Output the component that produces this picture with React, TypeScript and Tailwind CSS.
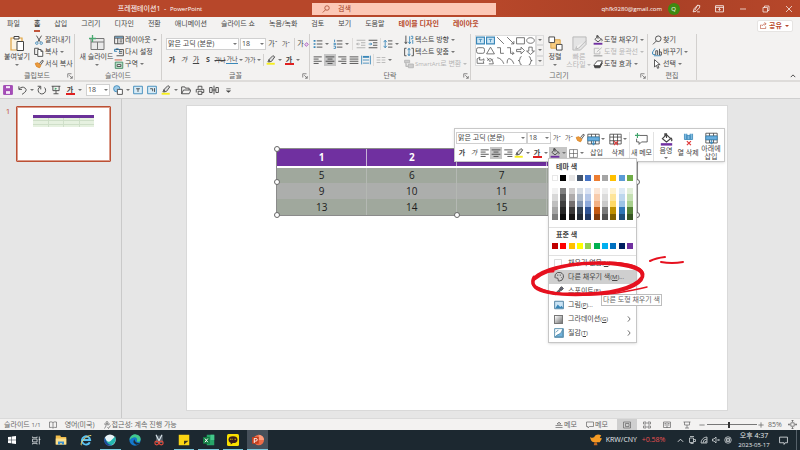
import type { ReactNode } from 'react';
import clsx from 'clsx';

const tabs = ['파일', '홈', '삽입', '그리기', '디자인', '전환', '애니메이션', '슬라이드 쇼', '녹음/녹화', '검토', '보기', '도움말'];
const contextTabs = ['테이블 디자인', '레이아웃'];

const themeColors = [
  { base: '#ffffff', shades: ['#f2f2f2', '#d8d8d8', '#bfbfbf', '#a5a5a5', '#7f7f7f'] },
  { base: '#000000', shades: ['#7f7f7f', '#595959', '#3f3f3f', '#262626', '#0c0c0c'] },
  { base: '#e7e6e6', shades: ['#d0cece', '#aeabab', '#757070', '#3a3838', '#171616'] },
  { base: '#44546a', shades: ['#d6dce4', '#adb9ca', '#8496b0', '#323f4f', '#222a35'] },
  { base: '#4472c4', shades: ['#d9e2f3', '#b4c6e7', '#8eaadb', '#2f5496', '#1f3864'] },
  { base: '#ed7d31', shades: ['#fbe5d5', '#f7cbac', '#f4b183', '#c55a11', '#833c0b'] },
  { base: '#a5a5a5', shades: ['#ededed', '#dbdbdb', '#c9c9c9', '#7b7b7b', '#525252'] },
  { base: '#ffc000', shades: ['#fff2cc', '#fee599', '#ffd965', '#bf9000', '#7f6000'] },
  { base: '#5b9bd5', shades: ['#deebf6', '#bdd7ee', '#9cc3e5', '#2e75b5', '#1e4e79'] },
  { base: '#70ad47', shades: ['#e2efd9', '#c5e0b3', '#a8d08d', '#538135', '#375623'] },
];

const standardColors = ['#c00000', '#ff0000', '#ffc000', '#ffff00', '#92d050', '#00b050', '#00b0f0', '#0070c0', '#002060', '#7030a0'];

const tableHead = ['1', '2', '', ''];
const tableRows = [
  ['5', '6', '7', ''],
  ['9', '10', '11', ''],
  ['13', '14', '15', ''],
];

type IconProps = { className?: string; children?: ReactNode };

function Icon({ className = 'size-[10px]', children }: IconProps) {
  return (
    <svg viewBox="0 0 16 16" fill="none" stroke="currentColor" strokeWidth="1.4" className={clsx('shrink-0', className)} aria-hidden="true">
      {children}
    </svg>
  );
}

function Chevron({ className = 'text-[#777]' }: { className?: string }) {
  return (
    <span className={clsx('flex w-1.5 shrink-0 justify-center', className)}>
      <svg viewBox="0 0 8 8" className="size-1" fill="currentColor" aria-hidden="true">
        <path d="M0 2h8L4 6z" />
      </svg>
    </span>
  );
}

const blue = '#3a87b8';

const CutIcon = () => (
  <Icon>
    <path d="M4 1l6 10M12 1L6 11" />
    <circle cx="4.5" cy="13" r="2" stroke={blue} />
    <circle cx="11.5" cy="13" r="2" stroke={blue} />
  </Icon>
);
const CopyIcon = () => (
  <Icon>
    <path d="M6 12H1V2h6v2" />
    <path d="M6 4h5l3 3v8H6zM11 4v3h3" fill="#fff" />
  </Icon>
);
const BrushIcon = () => (
  <Icon>
    <path d="M9 7l4-5 2 1-4 6z" />
    <path d="M2 7l4-1 5 4-2 4-5-2z" fill="#eb9b3e" stroke="#d98220" />
  </Icon>
);
const PasteIcon = () => (
  <Icon className="size-4">
    <path d="M9 15H2V3h11v3" stroke="#dfa23f" strokeWidth="1.2" fill="#fcf3e2" />
    <path d="M5 3V1.500h5V4H5z" fill="#fff" strokeWidth="1" />
    <path d="M8 6.500h6.500v9H8z" fill="#fff" strokeWidth="1" />
  </Icon>
);
const NewSlideIcon = () => (
  <Icon className="size-4">
    <path d="M2 3.500h13v11H2zM2 7h13M8.500 7v7.500" fill="#e9e9e9" stroke="#777" strokeWidth="1" />
    <path d="M3.500 0v7M0 3.500h7" stroke="#4aa970" strokeWidth="1.300" />
  </Icon>
);
const LayoutIcon = () => (
  <Icon>
    <path d="M1 2h14v12H1zM1 5h14M6 5v9M9 8h4M9 11h4" />
    <path d="M2 3.500h12" stroke={blue} />
  </Icon>
);
const ResetIcon = () => (
  <Icon>
    <path d="M2 4h13v10H4M8 7h5M8 10h5" />
    <path d="M1 7a4 4 0 117 2M1 3v4h4" stroke={blue} />
  </Icon>
);
const SectionIcon = () => (
  <Icon>
    <path d="M1 1.500h12" stroke="#d04e32" />
    <path d="M2 5h12v10H2z" fill="#b9dec8" stroke="#418a62" />
    <path d="M5 9h6v3H5z" fill="#fff" />
  </Icon>
);

// Korean sample letter used by the character formatting buttons
function Letter({ children = '가', className }: { children?: ReactNode; className?: string }) {
  return <span className={clsx('leading-[8px]', className)}>{children}</span>;
}

function FontColorIcon() {
  return (
    <span className="flex flex-col items-center">
      <Letter className="h-[7px] leading-[7px] font-bold">가</Letter>
      <span className="h-[2px] w-[9px] bg-[#e02020]" />
    </span>
  );
}
function HighlightIcon() {
  return (
    <Icon>
      <path d="M5 7l6-6 3 2-5 7-3 1z" fill="#ddd" />
      <path d="M5 7l-2 4h3" />
      <path d="M1 14h13" stroke="#f7ee1c" strokeWidth="3" />
    </Icon>
  );
}
function FillIcon({ className }: { className?: string }) {
  return (
    <Icon className={className}>
      <path d="M3 7l5-5 5 5-5 4zM6 4V1h2v5M13 6c2 1 2 3 1 4" />
      <path d="M1 14h14" stroke="#7030a0" strokeWidth="3" />
    </Icon>
  );
}

function Lines({ align }: { align: 'left' | 'center' | 'right' | 'both' }) {
  const d = {
    left: 'M1 3h13M1 6.500h8M1 10h13M1 13.500h8',
    center: 'M1 3h14M4 6.500h8M1 10h14M4 13.500h8',
    right: 'M2 3h13M7 6.500h8M2 10h13M7 13.500h8',
    both: 'M1 3h14M1 6.500h14M1 10h14M1 13.500h14',
  }[align];
  return (
    <Icon>
      <path d={d} />
    </Icon>
  );
}
const BulletIcon = () => (
  <Icon>
    <path d="M6 3h9M6 8h9M6 13h9" />
    <path d="M1 3h3M1 8h3M1 13h3" stroke={blue} strokeWidth="2.500" />
  </Icon>
);
const NumberIcon = () => (
  <Icon>
    <path d="M6 3h9M6 8h9M6 13h9" />
    <path d="M2.500 1v4M1 7h3v2H1M1 11.500h3V15H1" stroke={blue} />
  </Icon>
);
const IndentIcon = ({ out = false }: { out?: boolean }) => (
  <Icon className={clsx('size-[10px]', out && 'text-[#aaa]')}>
    <path d="M1 2h14M8 6h7M8 10h7M1 14h14" />
    <path d={out ? 'M6 8H1M3 6L1 8l2 2' : 'M1 8h5M4 6l2 2-2 2'} stroke={out ? '#aaa' : blue} />
  </Icon>
);
const SpacingIcon = () => (
  <Icon>
    <path d="M8 3h7M8 8h7M8 13h7" />
    <path d="M3.500 2v12M1 5l2.500-3L6 5M1 11l2.500 3L6 11" stroke={blue} />
  </Icon>
);
const DistributeIcon = () => (
  <Icon>
    <path d="M1 1v14M15 1v14M3 8h10M3 13h10" stroke={blue} />
    <path d="M3 3h10" stroke={blue} strokeWidth="3" />
  </Icon>
);
const ColumnsIcon = () => (
  <Icon className="size-[10px] text-[#b5b5b5]">
    <path d="M1 4h6M1 8h6M1 12h6M9 4h6M9 8h6M9 12h6" />
  </Icon>
);
const TextDirIcon = () => (
  <Icon>
    <path d="M3 1v12M1 11l2 3 2-3" />
    <path d="M9 2v12M7 11l2 3 2-3M11 2h3v4h-3M14 8v6" stroke={blue} />
  </Icon>
);
const TextAlignIcon = () => (
  <Icon>
    <path d="M4 2H1v12h3M12 2h3v12h-3" />
    <path d="M8 2v12M6 5l2-3 2 3M6 11l2 3 2-3" stroke={blue} />
  </Icon>
);
const SmartArtIcon = () => (
  <Icon>
    <path d="M1 2h8v4H1zM3 6v6h4M7 8h8v6H7z" fill="#ccc" />
  </Icon>
);
const ArrangeIcon = () => (
  <Icon className="size-[15px]">
    <path d="M3 4h10v9H3z" fill="#f8cd80" stroke="#d9a145" strokeWidth="1" />
    <path d="M1 1h6v6H1zM9 9h6v6H9z" fill="#fff" strokeWidth="1" />
  </Icon>
);
const QuickStyleIcon = () => (
  <Icon className="size-[15px] text-[#b5b5b5]">
    <path d="M1 1h14v8l-6 6H1z" fill="#e4e4e4" strokeWidth="1" />
    <path d="M15 5l-8 8-3 1 1-3" fill="#f3f2f1" strokeWidth="1" />
  </Icon>
);
const OutlineIcon = () => (
  <Icon>
    <path d="M10 2H2v9h9V7M6 8l8-7" />
    <path d="M1 14h14" strokeWidth="2.500" />
  </Icon>
);
const EffectIcon = () => (
  <Icon>
    <path d="M2 9l5-6h8l-4 8H2z" fill="#fff" />
    <path d="M2 10l1 4h8l4-8-4 5H2z" fill="#444" />
  </Icon>
);
const SearchIcon = ({ className }: { className?: string }) => (
  <Icon className={className}>
    <circle cx="10" cy="6" r="4.500" />
    <path d="M7 9.500L1.500 15" />
  </Icon>
);
const ReplaceIcon = () => (
  <Icon>
    <path d="M5 2L1 8v3M1 11l-1-3M1 12h4" stroke={blue} />
    <path d="M6 13V6h3v7M12 3v10h3V8h-3" />
    <path d="M3 14h11" stroke={blue} />
  </Icon>
);
const SelectIcon = () => (
  <Icon>
    <path d="M4 1v12l3-3 2 5 2-1-2-5h4z" fill="#fff" />
  </Icon>
);
const LauncherIcon = () => (
  <Icon className="size-[6px]">
    <path d="M2 12V2h10M6 6l8 8M14 8v6H8" strokeWidth="2" />
  </Icon>
);
const TableIcon = ({ mode }: { mode: 'insert' | 'delete' | 'below' | 'column' }) => (
  <Icon className="size-[13px]">
    {mode === 'column' ? (
      <path d="M3 1v7h3V1M10 1v7h3V1M6 3h4v5H6z" fill="#7eb9e0" stroke={blue} strokeWidth="1" />
    ) : (
      <path d="M1 1.500h14v12H1zM1 5h14M1 9.500h14M5.500 1.500v12M10.500 1.500v12" fill="#fff" strokeWidth="1" />
    )}
    {(mode === 'insert' || mode === 'below') && <path d="M1 5h14v4.500H1zM8 9v5M6 12l2 3 2-3" fill="#69aede" stroke={blue} strokeWidth="1" />}
    {(mode === 'delete' || mode === 'column') && <path d="M6 10l5 5M11 10l-5 5" stroke="#e03b3b" strokeWidth="1.500" />}
  </Icon>
);

const galleryShapes = [
  'box', 'box', 'M2 2l12 12', 'M2 2l12 12M14 9v5H9', 'M1 3h14v11H1z', 'M8 3C-1 3-1 13 8 13S17 3 8 3',
  'M4 3h8q3 0 3 3v4q0 3-3 3H4q-3 0-3-3V6q0-3 3-3z', 'M8 2l7 12H1z', 'M2 3h6v10h6', 'M2 3h6v10h6M11 10l3 3-3 3', 'M1 6h8V2l6 6-6 6v-4H1z', 'M5 2h6v7h4l-7 6-7-6h4z',
  'M2 13V5l5-3-1 5h5l3-2v3q-2 2 0 5z', 'M2 3l5 7 5-5M2 8q9-9 11 6H5', 'M2 3q8 1 12 11', 'M2 13Q2 3 7 5t7 9', 'M10 1q-3 0-3 4t-3 3q3 0 3 4t3 3', 'M5 1q3 0 3 4t3 3q-3 0-3 4t-3 3',
];

function GalleryShape({ d }: { d: string }) {
  return (
    <button className="flex items-center justify-center" aria-label="도형">
      {d === 'box' ? (
        <Icon className="size-[9px]">
          <path d="M1 2h14v12H1z" fill="#cde6f5" stroke={blue} strokeWidth="2" />
          <path d="M5 6h6M8 6v5" stroke={blue} />
        </Icon>
      ) : (
        <Icon className="size-[9px] text-[#555]">
          <path d={d} />
        </Icon>
      )}
    </button>
  );
}

function SmallButton({ icon, label, chevron, muted }: { icon: ReactNode; label: ReactNode; chevron?: boolean; muted?: boolean }) {
  return (
    <button className={clsx('flex h-[11px] items-center gap-px whitespace-nowrap', muted && 'text-[#b5b5b5]')}>
      {icon}
      <span>{label}</span>
      {chevron && <Chevron className={muted ? 'text-[#bbb]' : 'text-[#777]'} />}
    </button>
  );
}

function IconButton({ children, label, chevron, active, className }: { children: ReactNode; label: string; chevron?: boolean; active?: boolean; className?: string }) {
  return (
    <button aria-label={label} className={clsx('flex h-3 shrink-0 items-center justify-center', active && 'bg-[#c6c6c6]', className)}>
      <span className="flex w-3 justify-center">{children}</span>
      {chevron && <Chevron />}
    </button>
  );
}

function Dropdown({ label, value, className }: { label: string; value: string; className?: string }) {
  return (
    <label className={clsx('flex h-3 shrink-0 items-center border border-[#d0d0d0] bg-white', className)}>
      <select aria-label={label} className="min-w-0 flex-1 appearance-none bg-transparent pl-px leading-[10px] outline-none">
        <option>{value}</option>
      </select>
      <Chevron />
    </label>
  );
}

function Group({ title, launcher, className, children }: { title: string; launcher?: boolean; className?: string; children: ReactNode }) {
  return (
    <section className={clsx('flex shrink-0 flex-col border-r border-[#d2d0ce]', className)}>
      <div className="flex h-[37px] items-start">{children}</div>
      <div className="relative flex h-[9px] items-center justify-center text-[#666]">
        {title}
        {launcher && (
          <button className="absolute right-px" aria-label={`${title} 옵션`}>
            <LauncherIcon />
          </button>
        )}
      </div>
    </section>
  );
}

function TitleBar() {
  return (
    <header className="grid h-[17px] shrink-0 grid-cols-[312fr_184fr_304fr] items-center bg-[#b7472a] text-white">
      <h1 className="pl-2 text-center">프레젠테이션1&nbsp; - &nbsp;<span className="text-[6px]">PowerPoint</span></h1>
      <label className="flex h-3 items-center gap-2 bg-[#fcc8b6] pl-2.5 text-[#9c3a20]">
        <SearchIcon className="size-2" />
        <input aria-label="검색" placeholder="검색" className="w-full bg-transparent leading-[10px] outline-none placeholder:text-[#9c3a20]" />
      </label>
      <div className="flex h-full items-center justify-end bg-linear-to-r from-[#b7472a] via-[#a84026] to-[#b7472a]">
        <span className="text-[6px]">qhfk9280@gmail.com</span>
        <span className="flex w-[23px] justify-center">
          <span className="flex size-3 items-center justify-center rounded-full bg-[#3f8a10] text-[6px]">Q</span>
        </span>
        <button className="flex w-[23px] justify-center" aria-label="잉크">
          <Icon className="size-[9px]"><path d="M2 14l2-6 6-6 4 1-1 4-6 6zM10 2l-5 9M14 14H9" /></Icon>
        </button>
        <button className="flex w-[23px] justify-center" aria-label="리본 표시 옵션">
          <Icon className="size-[9px]"><path d="M1 3h14v11H1zM1 6h14M8 12V8M6 10l2-2 2 2" /></Icon>
        </button>
        <button className="flex w-[23px] justify-center" aria-label="최소화">
          <Icon className="size-2"><path d="M2 8h12" /></Icon>
        </button>
        <button className="flex w-[23px] justify-center" aria-label="이전 크기로">
          <Icon className="size-2"><path d="M2 5h9v9H2zM5 5V2h9v9h-3" /></Icon>
        </button>
        <button className="flex w-[23px] justify-center" aria-label="닫기">
          <Icon className="size-2"><path d="M2 2l12 12M14 2L2 14" /></Icon>
        </button>
      </div>
    </header>
  );
}

function TabBar() {
  return (
    <nav className="flex h-4 shrink-0 items-center gap-3.5 pr-[7px] pl-[7px] whitespace-nowrap">
      {tabs.map((tab) => (
        <button key={tab} className={clsx('h-[14px] border-b-2', tab === '홈' ? 'border-[#c1553b] font-bold' : 'border-transparent')}>
          {tab}
        </button>
      ))}
      {contextTabs.map((tab) => (
        <button key={tab} className="h-[14px] border-b-2 border-transparent font-bold text-[#b7472a]">
          {tab}
        </button>
      ))}
      <button className="mt-px ml-auto flex h-3 w-[36px] items-center justify-center gap-0.5 rounded-xs border border-[#e6e4e2] bg-white font-bold text-[#b7472a]">
        <Icon className="size-[7px]"><path d="M4 7H1v8h12v-5M5 9q1-5 8-5M10 1l4 3-4 4" /></Icon>
        공유
        <Chevron className="text-[#b7472a]" />
      </button>
    </nav>
  );
}

function Ribbon() {
  return (
    <div className="flex h-[49px] shrink-0 items-start border-b-2 border-[#dedcda] pt-px">
      <Group title="클립보드" launcher className="w-[75px]">
        <button className="flex w-[34px] flex-col items-center gap-0.5 pt-px">
          <PasteIcon />
          <span className="leading-[8px]">붙여넣기</span>
          <Chevron />
        </button>
        <div className="flex flex-col gap-px">
          <SmallButton icon={<CutIcon />} label="잘라내기" />
          <SmallButton icon={<CopyIcon />} label="복사" chevron />
          <SmallButton icon={<BrushIcon />} label="서식 복사" />
        </div>
      </Group>

      <Group title="슬라이드" className="w-[87px]">
        <button className="flex w-[39px] flex-col items-center gap-0.5 pt-px pl-1 whitespace-nowrap">
          <NewSlideIcon />
          <span className="leading-[8px]">새 슬라이드</span>
          <Chevron />
        </button>
        <div className="flex flex-col gap-px">
          <SmallButton icon={<LayoutIcon />} label="레이아웃" chevron />
          <SmallButton icon={<ResetIcon />} label="다시 설정" />
          <SmallButton icon={<SectionIcon />} label="구역" chevron />
        </div>
      </Group>

      <Group title="글꼴" launcher className="w-[148px]">
        <div className="flex flex-col gap-1 pt-1 pl-1">
          <div className="flex items-center gap-px">
            <Dropdown label="글꼴" value="맑은 고딕 (본문)" className="w-[73px]" />
            <Dropdown label="글꼴 크기" value="18" className="w-[26px]" />
            <IconButton label="글꼴 크게"><Letter>가ˆ</Letter></IconButton>
            <IconButton label="글꼴 작게"><Letter className="text-[6px]">가ˇ</Letter></IconButton>
            <span className="mx-px h-3 w-px bg-[#d2d0ce]" />
            <IconButton label="서식 지우기">
              <Letter>가</Letter>
              <Icon className="mt-0.5 size-[5px] text-[#a457b8]"><path d="M2 9l6-7 6 5-6 7z" fill="#e9d2ef" strokeWidth="2.500" /></Icon>
            </IconButton>
          </div>
          <div className="flex items-center">
            <IconButton label="굵게"><Letter className="font-bold">가</Letter></IconButton>
            <IconButton label="기울임꼴"><Letter className="italic">가</Letter></IconButton>
            <IconButton label="밑줄"><Letter className="underline">가</Letter></IconButton>
            <IconButton label="그림자"><Letter className="font-bold">S</Letter></IconButton>
            <IconButton label="취소선"><span className="text-[6px] line-through">가나</span></IconButton>
            <IconButton label="문자 간격" chevron><span className="border-b border-[#3a87b8] text-[6px] leading-[7px]">가나</span></IconButton>
            <IconButton label="대/소문자" chevron><span className="text-[6px]">가가</span></IconButton>
            <span className="mx-px h-3 w-px bg-[#d2d0ce]" />
            <IconButton label="강조 색" chevron><HighlightIcon /></IconButton>
            <IconButton label="글꼴 색" chevron><FontColorIcon /></IconButton>
          </div>
        </div>
      </Group>

      <Group title="단락" launcher className="w-[161px]">
        <div className="flex w-[94px] flex-col gap-1 pt-1 pl-0.5">
          <div className="flex items-center">
            <IconButton label="글머리 기호" chevron><BulletIcon /></IconButton>
            <IconButton label="번호 매기기" chevron className="ml-0.5"><NumberIcon /></IconButton>
            <span className="mx-0.5 h-3 w-px bg-[#dedcda]" />
            <IconButton label="내어쓰기"><IndentIcon out /></IconButton>
            <IconButton label="들여쓰기"><IndentIcon /></IconButton>
            <span className="mx-px h-3 w-px bg-[#dedcda]" />
            <IconButton label="줄 간격" chevron><SpacingIcon /></IconButton>
          </div>
          <div className="flex items-center">
            <IconButton label="왼쪽 맞춤"><Lines align="left" /></IconButton>
            <IconButton label="가운데 맞춤" active><Lines align="center" /></IconButton>
            <IconButton label="오른쪽 맞춤"><Lines align="right" /></IconButton>
            <IconButton label="양쪽 맞춤"><Lines align="both" /></IconButton>
            <IconButton label="균등 분할"><DistributeIcon /></IconButton>
            <span className="mx-px h-3 w-px bg-[#dedcda]" />
            <IconButton label="열" chevron><ColumnsIcon /></IconButton>
          </div>
        </div>
        <div className="flex flex-col gap-px">
          <SmallButton icon={<TextDirIcon />} label="텍스트 방향" chevron />
          <SmallButton icon={<TextAlignIcon />} label="텍스트 맞춤" chevron />
          <SmallButton icon={<SmartArtIcon />} label={<><span className="text-[6px]">SmartArt</span>로 변환</>} chevron muted />
        </div>
      </Group>

      <Group title="그리기" launcher className="w-[177px]">
        <div className="mt-px ml-1 grid h-[31px] w-[61px] grid-cols-6 grid-rows-3 border border-[#dcdcdc] bg-white">
          {galleryShapes.map((d, i) => (
            <GalleryShape key={i} d={d} />
          ))}
        </div>
        <div className="mt-px flex h-[31px] w-2 flex-col">
          {['위로', '아래로', '자세히'].map((name) => (
            <button key={name} aria-label={name} className="flex flex-1 items-center justify-center border border-[#dcdcdc]">
              <Chevron />
            </button>
          ))}
        </div>
        <button className="flex w-[22px] flex-col items-center gap-0.5 pt-0.5">
          <ArrangeIcon />
          <span className="leading-[8px]">정렬</span>
          <Chevron />
        </button>
        <button className="flex w-[26px] flex-col items-center gap-0.5 pt-0.5 leading-[8px] whitespace-nowrap text-[#b5b5b5]">
          <QuickStyleIcon />
          <span className="flex flex-col items-center">
            빠른
            <span className="flex items-center">스타일<Chevron className="text-[#bbb]" /></span>
          </span>
        </button>
        <div className="flex flex-col gap-px pl-px">
          <SmallButton icon={<FillIcon />} label="도형 채우기" chevron />
          <SmallButton icon={<OutlineIcon />} label="도형 윤곽선" chevron muted />
          <SmallButton icon={<EffectIcon />} label="도형 효과" chevron />
        </div>
      </Group>

      <Group title="편집" className="w-[49px]">
        <div className="flex flex-col gap-px pl-1">
          <SmallButton icon={<SearchIcon />} label="찾기" />
          <SmallButton icon={<ReplaceIcon />} label="바꾸기" chevron />
          <SmallButton icon={<SelectIcon />} label="선택" chevron />
        </div>
      </Group>

      <button className="mr-1 mb-px ml-auto self-end" aria-label="리본 축소">
        <Icon className="size-[6px]"><path d="M2 11l6-6 6 6" strokeWidth="2.500" /></Icon>
      </button>
    </div>
  );
}

function ToolCell({ label, chevron, children }: { label: string; chevron?: boolean; children: ReactNode }) {
  return (
    <button aria-label={label} className="flex shrink-0 items-center">
      <span className="flex w-3.5 justify-center">{children}</span>
      {chevron && <Chevron />}
    </button>
  );
}

function QuickAccess() {
  return (
    <div className="flex h-[17px] shrink-0 items-center border-b border-[#cfcfcf] pl-px">
      <ToolCell label="저장">
        <Icon><path d="M1 1h14v14H1z" fill="#a94fbb" stroke="#9a3fae" /><path d="M4 1h8v5H4zM4 9h8v6H4z" fill="#f7eaf9" stroke="#9a3fae" /></Icon>
      </ToolCell>
      <ToolCell label="실행 취소" chevron>
        <Icon><path d="M3 2v5h5M3 7q5-6 10-2t-5 10" /></Icon>
      </ToolCell>
      <ToolCell label="다시 실행"><Icon><path d="M5 3a6 6 0 107 1M1 2h5v5" /></Icon></ToolCell>
      <ToolCell label="슬라이드 쇼">
        <Icon><path d="M1 2h14M3 2v7h10V2M8 9v5M4 14h8" /><path d="M6 4v4l4-2z" fill="#4aa970" stroke="none" /></Icon>
      </ToolCell>
      <ToolCell label="글꼴 색" chevron><FontColorIcon /></ToolCell>
      <Dropdown label="크기" value="18" className="mr-px ml-[3px] w-6" />
      <ToolCell label="도형" chevron>
        <Icon><circle cx="6" cy="6" r="5" fill="#9fcdea" stroke={blue} /><path d="M7 7h8v8H7z" fill="#fff" /></Icon>
      </ToolCell>
      <ToolCell label="가로 텍스트 상자"><Icon><path d="M1 2h14v12H1z" fill="#d6ebf7" stroke={blue} /><path d="M5 6h6M8 6v5" /></Icon></ToolCell>
      <ToolCell label="세로 텍스트 상자"><Icon><path d="M1 2h14v12H1z" fill="#d6ebf7" stroke={blue} /><path d="M5 6h4v4M12 5v6" /></Icon></ToolCell>
      <ToolCell label="강조 색" chevron><HighlightIcon /></ToolCell>
      <ToolCell label="열기"><Icon><path d="M1 14V3h5l1 2h6v3M1 14l3-6h12l-3 6z" /></Icon></ToolCell>
      <ToolCell label="인쇄"><Icon><path d="M5 6V2h6v4M2 12V7h12v5h-3M5 10h6v5H5z" /></Icon></ToolCell>
      <ToolCell label="맞춤"><Icon><path d="M8 1v14M1 4h4v8H1zM11 4h4v8h-4zM5 8h6" /></Icon></ToolCell>
      <ToolCell label="빠른 실행 도구 모음 사용자 지정"><Icon className="size-[7px]"><path d="M3 4h10" /><path d="M2 8h12l-6 5z" fill="currentColor" stroke="none" /></Icon></ToolCell>
    </div>
  );
}

function SlidePanel() {
  return (
    <aside className="flex w-[122px] shrink-0 items-start border-r border-[#c9c9c9] pt-[7px] pr-2.5">
      <span className="w-4 text-center text-[8px] leading-[9px] text-[#c1553b]">1</span>
      <button aria-label="슬라이드 1" className="flex aspect-[95/56] flex-1 justify-center rounded-[1px] border border-[#bb5034] bg-white pt-2 outline outline-[#dc9c8b] -outline-offset-2">
        <span className="flex h-3 w-[61px] flex-col">
          <span className="h-[3px] bg-[#6a3198]" />
          <span className="grid flex-1 grid-cols-4 grid-rows-3 gap-px bg-[#cfdfc9]">
            {Array.from({ length: 12 }, (_, i) => (
              <span key={i} className="bg-[#e6f1e0]" />
            ))}
          </span>
        </span>
      </button>
    </aside>
  );
}

function Handle({ className }: { className: string }) {
  return <span className={clsx('absolute size-[6px] rounded-full border border-[#666] bg-white', className)} />;
}

function SlideTable() {
  return (
    <div className="relative mx-auto w-2/3 outline outline-[#8b8b8b]">
      <table className="w-full table-fixed border-collapse text-center text-[10px] leading-[15px] text-[#1c1c1c]">
        <thead>
          <tr className="h-[18px] border-b-2 border-white bg-[#7030a0] text-white">
            {tableHead.map((n, i) => (
              <th key={i} className="border-r border-[#c7b3d6] p-0 font-bold">{n}</th>
            ))}
          </tr>
        </thead>
        <tbody>
          {tableRows.map((row, i) => (
            <tr key={i} className={clsx('h-4', i % 2 === 0 ? 'bg-[#a0a89d]' : 'bg-[#acaeac]')}>
              {row.map((cell, col) => (
                <td key={col} className="border-r border-[#b4b8b3] p-0">{cell}</td>
              ))}
            </tr>
          ))}
        </tbody>
      </table>
      <Handle className="-top-[3px] -left-[3px]" />
      <Handle className="top-1/2 -left-[3px] -mt-[3px]" />
      <Handle className="-bottom-[3px] -left-[3px]" />
      <Handle className="-bottom-[3px] left-1/2 -ml-[3px]" />
      <Handle className="top-1/2 -right-[3px] -mt-[3px]" />
      <Handle className="-right-[3px] -bottom-[3px]" />
    </div>
  );
}

function MiniAction({ icon, label, chevron, className }: { icon: ReactNode; label: ReactNode; chevron?: boolean; className?: string }) {
  return (
    <button className={clsx('flex shrink-0 flex-col items-center leading-[8px] whitespace-nowrap', className)}>
      <span className="flex h-[14px] items-center">{icon}{chevron && <Chevron />}</span>
      {label}
    </button>
  );
}

function MiniToolbar() {
  return (
    <div className="absolute top-[22px] left-[267px] flex h-[34px] w-[271px] border border-[#c8c8c8] bg-white pt-[3px] shadow-sm">
      <div className="flex w-[131px] shrink-0 flex-col gap-[3px] pl-px">
        <div className="flex items-center">
          <Dropdown label="글꼴" value="맑은 고딕 (본문)" className="w-[71px]" />
          <Dropdown label="글꼴 크기" value="18" className="w-6" />
          <IconButton label="글꼴 크게"><Letter className="text-[6px]">가ˆ</Letter></IconButton>
          <IconButton label="글꼴 작게"><Letter className="text-[6px]">가ˇ</Letter></IconButton>
          <button aria-label="서식 복사"><BrushIcon /></button>
        </div>
        <div className="flex items-center">
          <IconButton label="굵게"><Letter className="font-bold">가</Letter></IconButton>
          <IconButton label="기울임꼴"><Letter className="italic">가</Letter></IconButton>
          <IconButton label="왼쪽 맞춤" className="w-[10px]"><Lines align="left" /></IconButton>
          <IconButton label="가운데 맞춤" active><Lines align="center" /></IconButton>
          <IconButton label="오른쪽 맞춤" className="w-[11px]"><Lines align="right" /></IconButton>
          <IconButton label="강조 색" chevron><HighlightIcon /></IconButton>
          <IconButton label="글꼴 색" chevron><FontColorIcon /></IconButton>
          <IconButton label="음영" chevron active><FillIcon /></IconButton>
          <IconButton label="테두리" chevron>
            <Icon className="size-[9px]"><path d="M1 1h14v14H1zM8 1v14M1 8h14" strokeWidth="1" /></Icon>
          </IconButton>
        </div>
      </div>
      <MiniAction icon={<TableIcon mode="insert" />} label="삽입" chevron className="w-[21px] gap-[3px]" />
      <MiniAction icon={<TableIcon mode="delete" />} label="삭제" chevron className="w-[22px] gap-[3px]" />
      <MiniAction
        icon={
          <Icon className="size-[13px]">
            <path d="M6 3h9v8H8l-3 3v-3H2V7" strokeWidth="1" />
            <path d="M3 0v6M0 3h6" stroke="#3fa36a" />
          </Icon>
        }
        label="새 메모"
        className="w-[25px] gap-[3px] border-x border-[#e2e2e2]"
      />
      <MiniAction icon={<FillIcon className="size-[13px]" />} label={<>음영<Chevron /></>} className="w-6 gap-px" />
      <MiniAction icon={<TableIcon mode="column" />} label="열 삭제" className="w-5 gap-[3px]" />
      <MiniAction icon={<TableIcon mode="below" />} label={<span>아래에<br />삽입</span>} className="w-[26px]" />
    </div>
  );
}

function Swatch({ color, className }: { color: string; className?: string }) {
  return <button aria-label={color} className={clsx('size-[6px]', className)} style={{ backgroundColor: color }} />;
}

const menuItems = [
  { text: '채우기 없음', keyHint: 'N', tail: '', icon: <Icon className="size-2 text-[#ccc]"><path d="M1 1h14v14H1z" /></Icon> },
  { text: '다른 채우기 색', keyHint: 'M', tail: '...', icon: <Icon><path d="M2 4a7 7 0 116 10.500c-3 0 0-3-2-4.500s-3 1-4.500-1.500z" /><path d="M6 4v2M10 4v2M12 8v1" /></Icon> },
  { text: '스포이트', keyHint: 'E', tail: '', icon: <Icon><path d="M2 14l1-3 6-6 2 2-6 6zM9 4l3-3 3 3-3 3z" fill="#667" /></Icon> },
  { text: '그림', keyHint: 'P', tail: '...', icon: <Icon><path d="M1 2h14v12H1z" fill="#cbe4f5" stroke="#447799" /><path d="M2 13l4-6 4 4 2-2 3 4z" fill="#3a87b8" stroke="none" /></Icon> },
  { text: '그라데이션', keyHint: 'G', tail: '', sub: true, icon: <span className="size-[9px] border border-[#777] bg-linear-to-br from-white to-[#777]" /> },
  { text: '질감', keyHint: 'T', tail: '', sub: true, icon: <Icon><path d="M1 1h14v14H1z" fill="#fff" stroke="#4b87a8" /><path d="M14 2v12H2q2-3 6-4t6-8M3 7l4-4" fill="#70b2dc" stroke="#4b87a8" /></Icon> },
];

function FillMenu() {
  return (
    <div className="absolute top-[52px] left-[361px] flex w-[89px] flex-col border border-[#c6c6c6] bg-white pb-0.5 shadow-sm">
      <h2 className="mt-0.5 pl-[7px] leading-[12px] font-bold">테마 색</h2>
      <div className="mt-0.5 flex justify-between px-[3px]">
        {themeColors.map(({ base }) => <Swatch key={base} color={base} className={base === '#ffffff' ? 'border border-[#e8e8e8]' : undefined} />)}
      </div>
      <div className="mt-[7px] flex h-8 justify-between px-[3px]">
        {themeColors.map(({ base, shades }) => (
          <div key={base} className="grid h-full w-[6px] grid-rows-5">
            {shades.map((shade) => <Swatch key={shade} color={shade} className="h-full" />)}
          </div>
        ))}
      </div>
      <div className="mt-[7px] border-t border-[#e1e1e1]" />
      <h2 className="pt-px pl-[7px] leading-[12px] font-bold">표준 색</h2>
      <div className="mt-0.5 flex justify-between px-[3px]">
        {standardColors.map((color) => <Swatch key={color} color={color} />)}
      </div>
      <div className="mt-1.5 border-t border-[#e1e1e1]" />
      {menuItems.map(({ text, keyHint, tail, sub, icon }) => (
        <button key={text} className={clsx('flex h-3.5 items-center pr-1 pl-1 whitespace-nowrap', keyHint === 'M' && 'bg-[#cfcfcf]')}>
          <span className="flex w-[15px] justify-start pl-px">{icon}</span>
          <span>{text}<span className="text-[6px]">(<u>{keyHint}</u>){tail}</span></span>
          {sub && <Icon className="ml-auto size-[6px]"><path d="M5 1l6 7-6 7" strokeWidth="2" /></Icon>}
        </button>
      ))}
    </div>
  );
}

// Hand-drawn red ring and the two emphasis dashes beside it
function RedMarker() {
  return (
    <svg viewBox="0 0 160 48" className="pointer-events-none absolute top-[146px] left-[340px] h-12 w-40" fill="none" stroke="#e6111f" strokeLinecap="round" aria-hidden="true">
      <path d="M26 19C14 19 5 25 6 32C9 44 50 44 80 41C103 38 117 31 116 22C114 13 90 10 65 11C38 12 17 17 7 26" strokeWidth="3" />
      <path d="M7 25C0 37 22 43 50 42C82 42 108 36 115 25C118 16 103 12 83 11" strokeWidth="3" />
      <path d="M10 35C28 45 69 44 90 41C102 39 112 37 120 35" strokeWidth="1.500" />
      <path d="M8 27C26 13 58 10 84 12C103 14 114 17 115 23" strokeWidth="2.500" />
      <path d="M123 9Q129 6 138 5" strokeWidth="2" />
      <path d="M134 10Q145 12 156 10" strokeWidth="2" />
    </svg>
  );
}

function Workspace() {
  return (
    <main className="flex min-h-0 flex-1 bg-[#e6e6e6]">
      <SlidePanel />
      <div className="min-w-0 flex-1 pt-[7px] pr-[73px] pl-[65px]">
        <div className="relative aspect-video w-full bg-white pt-[43px] outline outline-[#d9d9d9]">
          <SlideTable />
          <MiniToolbar />
          <FillMenu />
          <div role="tooltip" className="absolute top-[188px] left-[414px] border border-[#bdbdbd] bg-white px-px leading-[10px] whitespace-nowrap text-[#666]">
            다른 도형 채우기 색
          </div>
          <RedMarker />
        </div>
      </div>
    </main>
  );
}

function StatusBar() {
  return (
    <footer className="flex h-3 shrink-0 items-center gap-2 border-t border-[#dadada] pl-1 whitespace-nowrap text-[#666]">
      <span>슬라이드 <span className="text-[6px]">1/1</span></span>
      <button aria-label="맞춤법"><Icon className="size-2"><path d="M8 3v11M8 3Q5 1 1 2v11q4-1 7 1 3-2 7-1V2q-4-1-7 1" /></Icon></button>
      <span>영어(미국)</span>
      <button className="flex items-center gap-px">
        <Icon className="size-2"><circle cx="8" cy="3" r="2" /><path d="M2 6h12M6 6v4l-3 5M10 6v3M9 12l2 3 4-6" /></Icon>
        접근성: 계속 진행 가능
      </button>
      <div className="ml-auto flex h-full items-center">
        <button className="flex w-[31px] items-center gap-px"><Icon className="size-2"><path d="M1 9h14M1 13h14M4 6l4-4 4 4z" /></Icon>메모</button>
        <button className="flex w-[31px] items-center gap-px"><Icon className="size-2"><path d="M1 2h14v9H7l-3 3v-3H1z" /></Icon>메모</button>
        <button aria-label="기본" className="flex h-full w-5 items-center justify-center bg-[#cfcfcf]"><Icon className="size-2"><path d="M1 2h14v12H1zM5 5h7v6H5z" /></Icon></button>
        <button aria-label="여러 슬라이드" className="flex w-5 justify-center"><Icon className="size-2"><path d="M1 2h5v4H1zM10 2h5v4h-5zM1 10h5v4H1zM10 10h5v4h-5z" /></Icon></button>
        <button aria-label="읽기용 보기" className="flex w-5 justify-center"><Icon className="size-2"><path d="M8 3v11M1 2h14v11H1zM3 5h3M3 8h3M10 5h3M10 8h3" /></Icon></button>
        <button aria-label="슬라이드 쇼" className="flex w-5 justify-center"><Icon className="size-2"><path d="M1 2h14M3 2v6h10V2M8 8v6M4 14h8" /></Icon></button>
        <button aria-label="축소" className="flex w-[10px] justify-center"><Icon className="size-1.5"><path d="M1 8h14" strokeWidth="2" /></Icon></button>
        <input
          type="range"
          aria-label="확대/축소"
          min={10}
          max={160}
          defaultValue={76}
          className="h-2 w-[50px] appearance-none bg-[linear-gradient(#777,#777)] bg-[length:100%_1px] bg-center bg-no-repeat [&::-webkit-slider-thumb]:h-[6px] [&::-webkit-slider-thumb]:w-[2px] [&::-webkit-slider-thumb]:appearance-none [&::-webkit-slider-thumb]:bg-[#333]"
        />
        <button aria-label="확대" className="flex w-2 justify-center"><Icon className="size-1.5"><path d="M1 8h14M8 1v14" strokeWidth="2" /></Icon></button>
        <span className="w-5 text-center">85%</span>
        <button aria-label="창에 맞춤" className="flex w-[15px] justify-center"><Icon className="size-[9px]"><path d="M5 5h6v6H5zM8 0v4M8 12v4M0 8h4M12 8h4M6 2l2-2 2 2M6 14l2 2 2-2M2 6L0 8l2 2M14 6l2 2-2 2" /></Icon></button>
      </div>
    </footer>
  );
}

const pinned = [
  { name: '파일 탐색기', icon: <><path d="M1 2h6l1 2h7v10H1z" fill="#f2bd4b" /><path d="M1 6h14v8H1z" fill="#fde08d" /><path d="M4 14v-4h8v4h-3v-2H7v2z" fill="#3b8fd0" /></> },
  { name: 'Internet Explorer', icon: <><path d="M13 11a5.500 5.500 0 11.500-3H4" stroke="#5cc3f2" strokeWidth="2.600" fill="none" /><path d="M2 15C-1 12 9 1 15 2" stroke="#f4d568" strokeWidth="1.300" fill="none" /></> },
  { name: 'Whale', open: true, icon: <><circle cx="8" cy="8" r="7.500" fill="#e8f4f8" /><path d="M1 5q4 8 8 4t6-6q2 9-5 12Q1 16 1 5z" fill="#24b7b0" /><path d="M1 4q2 10 10 11-9 3-11-6z" fill="#1d4b9c" /></> },
  { name: 'Edge', icon: <><circle cx="8" cy="8" r="7.500" fill="#1479cc" /><path d="M1 6Q4 0 9 .5q7 1 6.500 7-1 4-5 2.500Q12 4 6 4.500 3 5 1 8z" fill="#43c98c" /><path d="M7 7q-3 5 2 7 3 1 5-2-5 1-7-5z" fill="#1f2a33" /></> },
  { name: '캡처', icon: <><path d="M4 2h9v10H4z" fill="#54606a" /><path d="M4 1l4 8M12 1L8 9" stroke="#d9e4ea" strokeWidth="1.500" /><circle cx="5" cy="12" r="2.500" fill="none" stroke="#df4b3c" strokeWidth="1.600" /><circle cx="11" cy="12" r="2.500" fill="none" stroke="#df4b3c" strokeWidth="1.600" /></> },
  { name: '스티커 메모', open: true, icon: <><path d="M1 1h14v14H1z" fill="#fbd513" /><path d="M8 14V9h6z" fill="#3a3420" /></> },
  { name: 'Excel', open: true, icon: <><path d="M5 1h10v14H5z" fill="#27a568" /><path d="M10 1h5v7h-5z" fill="#43c78a" /><path d="M0 4h9v9H0z" fill="#107c41" /><path d="M2.500 6l4 5M6.500 6l-4 5" stroke="#fff" strokeWidth="1.300" /></> },
  { name: '카카오톡', open: true, icon: <><rect width="16" height="16" rx="2" fill="#f9e000" /><ellipse cx="8" cy="7.500" rx="6" ry="4.500" fill="#3a1d1d" /><path d="M5 10v4l4-3z" fill="#3a1d1d" /><path d="M4 7h2M7 7h1M10 7h2" stroke="#f9e000" /></> },
  { name: 'PowerPoint', open: true, active: true, icon: <><circle cx="9" cy="8" r="7" fill="#ed6c47" /><path d="M9 1a7 7 0 017 7H9z" fill="#ff9d7c" /><path d="M0 4h9v9H0z" fill="#c43e1c" /><path d="M3 12V6h2q2 0 2 1.700T5 9.500H3" stroke="#fff" strokeWidth="1.200" fill="none" /></> },
];

function Taskbar() {
  return (
    <div className="flex h-5 shrink-0 items-center bg-[#1c2830] text-[#e8ecee]">
      <button aria-label="시작" className="flex w-6 justify-center">
        <svg viewBox="0 0 16 16" className="size-2" fill="#fff"><path d="M0 2.200L6.500 1.300v6.200H0zM7.500 1.100L16 0v7.500H7.500zM0 8.500h6.500v6.200L0 13.800zM7.500 8.500H16V16l-8.500-1.100z" /></svg>
      </button>
      <button aria-label="작업 보기" className="flex w-[25px] justify-center">
        <Icon className="size-[9px]"><path d="M1 1v2h8V1M1 15v-2h8v2M1 5.500h8v5H1zM13 1v14M12 6h3" /></Icon>
      </button>
      <div className="grid h-full w-[221px] grid-cols-9">
        {pinned.map(({ name, icon, open, active }) => (
          <button
            key={name}
            aria-label={name}
            className={clsx('mx-0.5 flex items-center justify-center border-b', open ? 'border-[#7cc8dc]' : 'border-transparent', active && 'bg-[#46505a]')}
          >
            <svg viewBox="0 0 16 16" className="size-3" fill="none">{icon}</svg>
          </button>
        ))}
      </div>
      <div className="ml-auto flex h-full items-center whitespace-nowrap">
        <button className="flex items-center gap-1">
          <svg viewBox="0 0 16 16" className="size-3"><path d="M0 4q5 3 7-2 4-3 8 0l-2 3 3 1-3 5H6q-5 0-6-7z" fill="#f59b25" /><path d="M6 11l-1 4h5l-1-4z" fill="#c56a20" /></svg>
          KRW/CNY
          <span className="w-[25px] text-[#ea5050]">+0.58%</span>
        </button>
        <button aria-label="숨겨진 아이콘" className="ml-2 flex w-3 justify-center"><Icon className="size-[7px]"><path d="M2 11l6-6 6 6" strokeWidth="2" /></Icon></button>
        <button aria-label="장치" className="flex w-3 justify-center"><Icon className="size-2"><path d="M3 4h8v9H3zM4 1h8M11 7h4v4h-4M5 15h6" /></Icon></button>
        <button aria-label="네트워크" className="flex w-3 justify-center"><Icon className="size-2"><path d="M2 14A12 12 0 0114 2v12zM6 14a8 8 0 018-8M10 14a4 4 0 014-4" /></Icon></button>
        <button aria-label="소리" className="flex w-3 justify-center"><Icon className="size-2"><path d="M1 6h3l4-4v12l-4-4H1zM11 6l4 4M15 6l-4 4" /></Icon></button>
        <button aria-label="입력기" className="flex w-3 justify-center"><Icon className="size-2"><circle cx="8" cy="8" r="6.500" /><path d="M5 5h6v6H5zM5 8h6" /></Icon></button>
        <button className="w-10 text-center leading-[9px]">오후 4:37<br /><span className="text-[6px]">2023-05-17</span></button>
        <button aria-label="알림" className="flex w-[18px] justify-center"><Icon className="size-[9px]"><path d="M1 2h14v10h-4l-2 3v-3H1z" /></Icon></button>
        <span className="ml-1 h-full w-1 border-l border-[#56616a]" />
      </div>
    </div>
  );
}

export default function App() {
  return (
    <div className="flex h-screen w-full flex-col overflow-hidden bg-[#f3f2f1] font-['Open_Sans','Noto_Sans_CJK_KR',sans-serif] text-[7px] leading-[10px] text-[#444]">
      <TitleBar />
      <TabBar />
      <Ribbon />
      <QuickAccess />
      <Workspace />
      <StatusBar />
      <Taskbar />
    </div>
  );
}
